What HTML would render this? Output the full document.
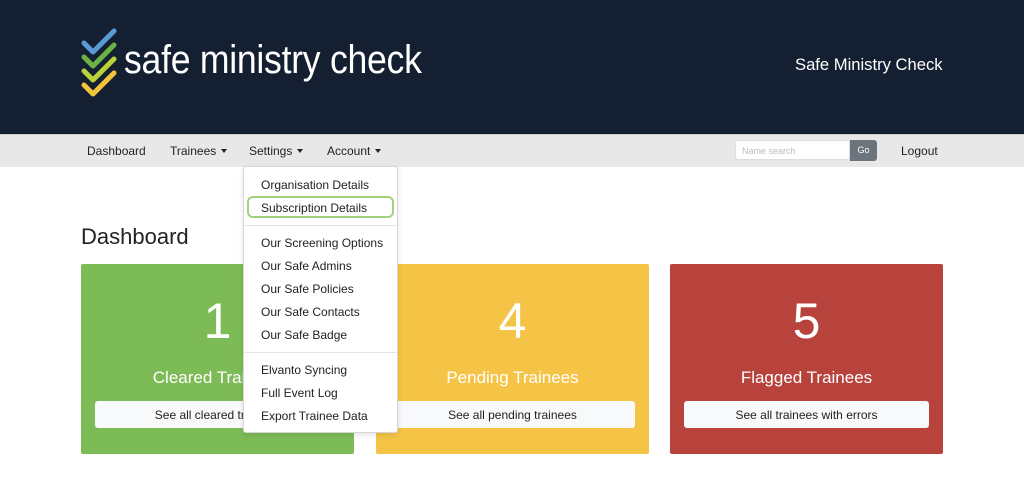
<!DOCTYPE html>
<html><head><style>
body{margin:0;width:1024px;height:480px;overflow:hidden;background:#fff;font-family:"Liberation Sans",sans-serif;position:relative}
.hdr{position:absolute;left:0;top:0;width:1024px;height:134px;background:#142032}
.logo{position:absolute;left:124px;top:38px;color:#fff;font-size:40px;letter-spacing:-0.3px;transform:scaleX(0.89);transform-origin:0 0;white-space:nowrap}
.title{position:absolute;left:795px;top:55px;color:#fff;font-size:16.6px}
.nav{position:absolute;top:134px;left:0;width:1024px;height:32px;background:#e8e8e8;border-top:1px solid #ccc}
.nav span{position:absolute;top:9px;font-size:12px;color:#222}
.car:after{content:"";display:inline-block;margin-left:5px;vertical-align:2px;border-left:3.5px solid transparent;border-right:3.5px solid transparent;border-top:4px solid #222}
.search{position:absolute;left:735px;top:5px;width:115px;height:20px;background:#fff;border:1px solid #ddd;border-radius:3px 0 0 3px;font-size:9px;color:#bbb;line-height:20px;padding-left:6px;box-sizing:border-box}
.go{position:absolute;left:850px;top:5px;width:27px;height:21px;background:#6c757d;color:#fff;font-size:9px;text-align:center;line-height:21px;border-radius:0 3px 3px 0}
h1{position:absolute;left:81px;top:224px;margin:0;font-weight:400;font-size:22px;color:#222}
.card{position:absolute;top:264px;width:273px;height:190px;color:#fff;text-align:center;border-radius:2px}
.card .n{position:absolute;width:100%;top:28px;font-size:50px}
.card .l{position:absolute;top:104px;width:100%;font-size:17px}
.card .b{position:absolute;left:14px;right:14px;top:137px;height:27px;background:#f8f9fa;color:#222;font-size:12px;line-height:28px;border-radius:3px}
.dd{position:absolute;left:243px;top:166px;width:153px;height:265px;background:#fff;border:1px solid #d6d6d6;border-radius:3px;box-shadow:0 2px 6px rgba(0,0,0,.1)}
.dd div{position:absolute;left:17px;font-size:12px;color:#222}
.dd hr{position:absolute;left:0;width:153px;margin:0;border:0;border-top:1px solid #e5e5e5}
.hl{position:absolute;left:3px;top:29px;width:147px;height:22px;border:2px solid #9fd27a;border-radius:6px;box-sizing:border-box}
</style></head><body>
<div class="hdr">
<svg style="position:absolute;left:80px;top:26px" width="40" height="78" viewBox="0 0 40 78" fill="none" stroke-width="5" stroke-linecap="round" stroke-linejoin="round">
<polyline points="4,17 13,26 34,5" stroke="#5b9bd5"/>
<polyline points="4,31 13,40 34,19" stroke="#6cb346"/>
<polyline points="4,45 13,54 34,33" stroke="#b9d43a"/>
<polyline points="4,59 13,68 34,47" stroke="#f2c43a"/>
</svg>
<div class="logo">safe ministry check</div>
<div class="title">Safe Ministry Check</div>
</div>
<div class="nav">
<span style="left:87px">Dashboard</span>
<span style="left:170px" class="car">Trainees</span>
<span style="left:249px" class="car">Settings</span>
<span style="left:327px" class="car">Account</span>
<div class="search">Name search</div><div class="go">Go</div>
<span style="left:901px">Logout</span>
</div>
<h1>Dashboard</h1>
<div class="card" style="left:81px;background:#7dbb57"><div class="n">1</div><div class="l">Cleared Trainees</div><div class="b">See all cleared trainees</div></div>
<div class="card" style="left:376px;background:#f5c446"><div class="n">4</div><div class="l">Pending Trainees</div><div class="b">See all pending trainees</div></div>
<div class="card" style="left:670px;background:#b8423c"><div class="n">5</div><div class="l">Flagged Trainees</div><div class="b">See all trainees with errors</div></div>
<div class="dd">
<div style="top:11px">Organisation Details</div>
<span class="hl"></span>
<div style="top:34px">Subscription Details</div>
<hr style="top:58px">
<div style="top:69px">Our Screening Options</div>
<div style="top:92px">Our Safe Admins</div>
<div style="top:115px">Our Safe Policies</div>
<div style="top:138px">Our Safe Contacts</div>
<div style="top:161px">Our Safe Badge</div>
<hr style="top:185px">
<div style="top:196px">Elvanto Syncing</div>
<div style="top:219px">Full Event Log</div>
<div style="top:242px">Export Trainee Data</div>
</div>
</body></html>
